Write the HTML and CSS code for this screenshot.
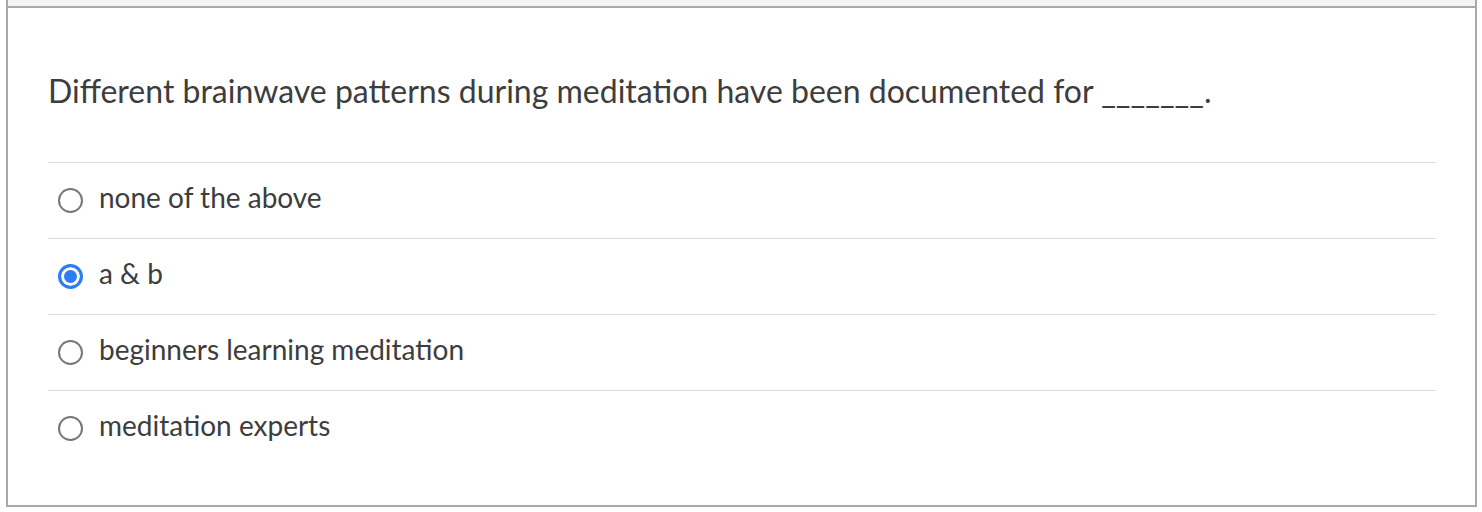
FILE: index.html
```html
<!DOCTYPE html>
<html>
<head>
<meta charset="utf-8">
<link rel="stylesheet" href="styles.css">
</head>
<body>
<div class="frame">
  <div class="quiz">
    <div class="quiz-header"></div>
    <div class="quiz-body">
      <p class="question">Different brainwave patterns during meditation have been documented for _______.</p>
      <ul class="answers">
        <li class="answer"><span class="radio"></span><span class="label">none of the above</span></li>
        <li class="answer"><span class="radio checked"></span><span class="label">a &amp; b</span></li>
        <li class="answer"><span class="radio"></span><span class="label">beginners learning meditation</span></li>
        <li class="answer"><span class="radio"></span><span class="label">meditation experts</span></li>
      </ul>
    </div>
  </div>
</div>
</body>
</html>
```

FILE: styles.css
```css
html, body {
  margin: 0;
  padding: 0;
  background: #ffffff;
}
body {
  font-family: Lato, "Open Sans", sans-serif;
  color: #3d3d3d;
}
.frame {
  padding: 0 5px 4px 6px;
}
.quiz {
  border: 2px solid #a8a8a8;
  border-top: none;
}
.quiz-header {
  height: 6px;
  background: #f4f4f4;
  border-bottom: 2px solid #a8a8a8;
}
.quiz-body {
  padding: 0 39px 39px 40px;
}
.question {
  margin: 0;
  padding-top: 63px;
  height: 154px;
  box-sizing: border-box;
  font-size: 32px;
  line-height: 40px;
}
.answers {
  list-style: none;
  margin: 0;
  padding: 0;
}
.answer {
  display: flex;
  align-items: center;
  gap: 16px;
  height: 75px;
  border-top: 1px solid #dcdcdc;
  padding-left: 10px;
  font-size: 28px;
}
.radio {
  width: 25px;
  height: 25px;
  box-sizing: border-box;
  border: 2px solid #777777;
  border-radius: 50%;
  flex: none;
}
.radio.checked {
  border: 3px solid #2d7cf6;
  background: #2d7cf6;
  box-shadow: inset 0 0 0 3px #ffffff;
}
.label {
  line-height: 32px;
  margin-bottom: 7px;
}
```
